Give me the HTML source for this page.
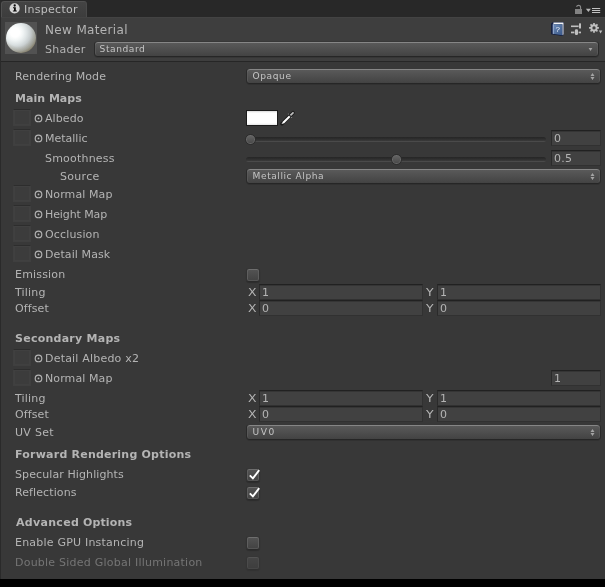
<!DOCTYPE html>
<html><head><meta charset="utf-8">
<style>
*{box-sizing:border-box;margin:0;padding:0}
html,body{width:605px;height:587px;overflow:hidden;background:#383838}
body{position:relative;font-family:"DejaVu Sans","Liberation Sans",sans-serif;font-size:11px;color:#b4b4b4}
.abs{position:absolute}
.t{transform:translateZ(0);position:absolute;white-space:nowrap;line-height:14px;height:14px;letter-spacing:0.1px}
.b{font-weight:bold;letter-spacing:0}
.xy{transform:translateZ(0) scaleX(1.13);transform-origin:0 0}
#tabbar{left:0;top:0;width:605px;height:17px;background:#282828}
#tab{left:1px;top:1px;width:86px;height:16px;background:linear-gradient(#444,#3c3c3c);border:1px solid #505050;border-bottom:none;border-right-color:#4a4a4a;border-radius:3px 3px 0 0}
#hdr{left:0;top:17px;width:605px;height:44px;background:#3e3e3e;border-top:1px solid #434343}
#hdrline{left:0;top:61px;width:605px;height:1px;background:#262626}
#lborder{left:0;top:0;width:1px;height:579px;background:#2a2a2a}
#bottom{left:0;top:579px;width:605px;height:8px;background:#000}
.dd{position:absolute;height:16px;border-radius:4px;border:1px solid #2a2a2a;border-top-color:#383838;border-bottom-color:#262626;background:linear-gradient(#5b5b5b,#434343);box-shadow:inset 0 1px 0 #868686,inset -1px 0 0 #585858, inset 1px 0 0 #585858,0 1px 0 rgba(0,0,0,.12)}
.dd span{transform:translateZ(0);position:absolute;left:5.6px;top:1px;font-size:9.1px;line-height:12px;color:#c4c4c4;letter-spacing:0.55px}
.tf{position:absolute;height:16px;background:#414141;border:1px solid #313131;border-top-color:#212121;border-left-color:#2a2a2a;box-shadow:inset 0 1px 0 rgba(0,0,0,.18)}
.tf span{transform:translateZ(0);letter-spacing:0.3px;position:absolute;left:2px;top:1px;line-height:13px;font-size:11px;color:#b4b4b4}
.tex{position:absolute;left:13px;width:18px;height:17px;background:#3c3c3c;border:1px solid #3f3f3f;border-top:1px solid #2d2d2d;box-shadow:inset 0 0 0 1px #404040}
.cb{position:absolute;left:246px;width:14px;height:14px;margin-top:-1px;border-radius:3px;background:linear-gradient(#545454,#424242);border:1px solid #323232;border-top-color:#363636;border-bottom-color:#2a2a2a;box-shadow:inset 0 1px 0 #6e6e6e,inset 1px 0 0 #5e5e5e,inset -1px 0 0 #5e5e5e,inset 0 -1px 0 #545454,0 1px 1px rgba(0,0,0,.2)}
.circ{position:absolute;left:34.8px;width:7.4px;height:7.4px;border:1px solid #b4b4b4;border-radius:50%}
.circ:after{content:"";position:absolute;left:2.1px;top:2.1px;width:1.2px;height:1.2px;background:#b4b4b4;border-radius:50%}
.track{position:absolute;left:246px;width:300px;height:5px;border-radius:2.5px;background:linear-gradient(#262626 0,#2a2a2a 25%,#343434 60%,#3a3a3a 79%,#4c4c4c 80%,#484848 100%)}
.knob{position:absolute;width:11px;height:11px;border-radius:50%;background:linear-gradient(#666,#464646);border:1px solid #2c2c2c;box-shadow:inset 0 0 0 0.8px #6e6e6e}
#prev{left:5px;top:22px;width:32px;height:32px;background:#525252}
#sphere{left:6px;top:23px;width:30px;height:30px;border-radius:50%;background:radial-gradient(circle at 12px 10px,rgba(0,0,0,0) 13px,rgba(120,105,70,.25) 18px,rgba(110,95,60,.55) 21px),radial-gradient(circle at 9px 9.5px,#fff 0,#fff 4.5px,#f1f5f5 8px,#dce2e3 12px,#c4cacb 16px,#adb3b2 20px,#969a94 24px)}
svg{position:absolute;left:0;top:0}
</style></head><body>
<div id="tabbar" class="abs"></div>
<div id="hdr" class="abs"></div>
<div id="tab" class="abs"></div>
<div id="hdrline" class="abs"></div>
<div id="lborder" class="abs"></div>
<div id="bottom" class="abs"></div>
<div id="prev" class="abs"></div><div id="sphere" class="abs"></div>
<div class="t " style="left:24px;top:3px;color:#bebebe;letter-spacing:0.28px">Inspector</div>
<div class="t" style="left:45px;top:22px;font-size:12px;line-height:16px;height:16px;letter-spacing:0.35px">New Material</div>
<div class="t " style="left:45px;top:43px;;letter-spacing:0.25px">Shader</div>
<div class="dd" style="left:94px;top:41px;width:505px"><span><i style="font-style:normal;margin-left:-1px">Standard</i></span></div>
<div class="t " style="left:15px;top:70px;">Rendering Mode</div>
<div class="dd" style="left:246px;top:68px;width:355px"><span>Opaque</span></div>
<div class="t b" style="left:15px;top:92px;;letter-spacing:0.02px">Main Maps</div>
<div class="tex" style="top:109px"></div>
<div class="t " style="left:45px;top:112px;">Albedo</div>
<div class="abs" style="left:246px;top:110px;width:32px;height:16px;background:linear-gradient(#d8d8d8 0,#fff 14%,#fff 86%,#e4e4e4 100%);border:1px solid #1c1c1c"></div>
<div class="tex" style="top:129px"></div>
<div class="t " style="left:45px;top:132px;;letter-spacing:0.0px">Metallic</div>
<div class="track" style="top:137px"></div><div class="knob" style="left:244.5px;top:133.5px"></div>
<div class="tf" style="left:551px;top:130px;width:50px"><span>0</span></div>
<div class="t " style="left:45px;top:152px;;letter-spacing:0.2px">Smoothness</div>
<div class="track" style="top:157px"></div><div class="knob" style="left:390.5px;top:153.5px"></div>
<div class="tf" style="left:551px;top:150px;width:50px"><span>0.5</span></div>
<div class="t " style="left:60px;top:170px;;letter-spacing:0.3px">Source</div>
<div class="dd" style="left:246px;top:168px;width:355px"><span>Metallic Alpha</span></div>
<div class="tex" style="top:185px"></div>
<div class="t " style="left:45px;top:188px;">Normal Map</div>
<div class="tex" style="top:205px"></div>
<div class="t " style="left:45px;top:208px;;letter-spacing:-0.1px">Height Map</div>
<div class="tex" style="top:225px"></div>
<div class="t " style="left:45px;top:228px;;letter-spacing:0.15px">Occlusion</div>
<div class="tex" style="top:245px"></div>
<div class="t " style="left:45px;top:248px;">Detail Mask</div>
<div class="t " style="left:15px;top:268px;;letter-spacing:0.18px">Emission</div>
<div class="cb" style="top:269px;"></div>
<div class="t " style="left:15px;top:286px;;letter-spacing:0.2px">Tiling</div>
<div class="t xy" style="left:247.5px;top:286px;">X</div>
<div class="tf" style="left:259px;top:284px;width:164px"><span>1</span></div>
<div class="t xy" style="left:425.5px;top:286px;">Y</div>
<div class="tf" style="left:437px;top:284px;width:164px"><span>1</span></div>
<div class="t " style="left:15px;top:302px;;letter-spacing:0.12px">Offset</div>
<div class="t xy" style="left:247.5px;top:302px;">X</div>
<div class="tf" style="left:259px;top:300px;width:164px"><span>0</span></div>
<div class="t xy" style="left:425.5px;top:302px;">Y</div>
<div class="tf" style="left:437px;top:300px;width:164px"><span>0</span></div>
<div class="t b" style="left:15px;top:332px;;letter-spacing:0.25px">Secondary Maps</div>
<div class="tex" style="top:349px"></div>
<div class="t " style="left:45px;top:352px;;letter-spacing:0.2px">Detail Albedo x2</div>
<div class="tex" style="top:369px"></div>
<div class="t " style="left:45px;top:372px;">Normal Map</div>
<div class="tf" style="left:551px;top:370px;width:50px"><span>1</span></div>
<div class="t " style="left:15px;top:392px;;letter-spacing:0.2px">Tiling</div>
<div class="t xy" style="left:247.5px;top:392px;">X</div>
<div class="tf" style="left:259px;top:390px;width:164px"><span>1</span></div>
<div class="t xy" style="left:425.5px;top:392px;">Y</div>
<div class="tf" style="left:437px;top:390px;width:164px"><span>1</span></div>
<div class="t " style="left:15px;top:408px;;letter-spacing:0.12px">Offset</div>
<div class="t xy" style="left:247.5px;top:408px;">X</div>
<div class="tf" style="left:259px;top:406px;width:164px"><span>0</span></div>
<div class="t xy" style="left:425.5px;top:408px;">Y</div>
<div class="tf" style="left:437px;top:406px;width:164px"><span>0</span></div>
<div class="t " style="left:15px;top:426px;;letter-spacing:0.3px">UV Set</div>
<div class="dd" style="left:246px;top:424px;width:355px"><span><i style="font-style:normal;letter-spacing:1.5px">UV0</i></span></div>
<div class="t b" style="left:15px;top:448px;;letter-spacing:0.22px">Forward Rendering Options</div>
<div class="t " style="left:15px;top:468px;">Specular Highlights</div>
<div class="cb" style="top:469px;"></div>
<div class="t " style="left:15px;top:486px;">Reflections</div>
<div class="cb" style="top:487px;"></div>
<div class="t b" style="left:16px;top:516px;letter-spacing:.12px"><i style="font-style:normal;letter-spacing:.3px">Advanced</i> Options</div>
<div class="t " style="left:15px;top:536px;;letter-spacing:0.21px">Enable GPU Instancing</div>
<div class="cb" style="top:537px;"></div>
<div class="t " style="left:15px;top:556px;color:#757575;letter-spacing:0.23px">Double Sided Global Illumination</div>
<div class="cb" style="top:557px;opacity:.5"></div>
<svg width="605" height="587" viewBox="0 0 605 587">
<circle cx="38.5" cy="118.4" r="3.3" fill="none" stroke="#b4b4b4" stroke-width="1.15"/><circle cx="38.5" cy="118.4" r="0.9" fill="#b4b4b4"/>
<circle cx="38.5" cy="138.4" r="3.3" fill="none" stroke="#b4b4b4" stroke-width="1.15"/><circle cx="38.5" cy="138.4" r="0.9" fill="#b4b4b4"/>
<circle cx="38.5" cy="194.4" r="3.3" fill="none" stroke="#b4b4b4" stroke-width="1.15"/><circle cx="38.5" cy="194.4" r="0.9" fill="#b4b4b4"/>
<circle cx="38.5" cy="214.4" r="3.3" fill="none" stroke="#b4b4b4" stroke-width="1.15"/><circle cx="38.5" cy="214.4" r="0.9" fill="#b4b4b4"/>
<circle cx="38.5" cy="234.4" r="3.3" fill="none" stroke="#b4b4b4" stroke-width="1.15"/><circle cx="38.5" cy="234.4" r="0.9" fill="#b4b4b4"/>
<circle cx="38.5" cy="254.4" r="3.3" fill="none" stroke="#b4b4b4" stroke-width="1.15"/><circle cx="38.5" cy="254.4" r="0.9" fill="#b4b4b4"/>
<circle cx="38.5" cy="358.4" r="3.3" fill="none" stroke="#b4b4b4" stroke-width="1.15"/><circle cx="38.5" cy="358.4" r="0.9" fill="#b4b4b4"/>
<circle cx="38.5" cy="378.4" r="3.3" fill="none" stroke="#b4b4b4" stroke-width="1.15"/><circle cx="38.5" cy="378.4" r="0.9" fill="#b4b4b4"/>
<circle cx="14.6" cy="8.4" r="5.1" fill="#d6d6d6"/>
<circle cx="14.7" cy="5.5" r="1.15" fill="#0c0c0c"/><path d="M13 7.2h2.8v3.4h1v1h-3.9v-1h1.1v-2.4h-1z" fill="#0c0c0c"/>
<rect x="575" y="9" width="7" height="5" fill="#828282"/><path d="M576.6 6.8Q576.8 5.4 578.6 5.4Q580.6 5.4 580.6 7.4V9" fill="none" stroke="#8a8a8a" stroke-width="1.1"/>
<path d="M585.9 8.8h5l-2.5 3.2z" fill="#b8b8b8"/><path d="M592 8.5h8.2M592 10.5h8.2M592 12.5h8.2" stroke="#c2c2c2" stroke-width="1"/>
<path d="M281.9 123.7L293 112.7" stroke="#191919" stroke-width="3.5" stroke-linecap="round"/><path d="M281.5 124.1L283 121.6L289.6 115.1L290.9 116.4L284.2 123.2z" fill="#fff"/><path d="M290.2 115.7L293 112.8" stroke="#bcbcbc" stroke-width="1.8" stroke-linecap="round"/><path d="M288.2 113.9l3.4 3.5" stroke="#2a2a2a" stroke-width="1.2"/><circle cx="288.4" cy="114" r=".6" fill="#909090"/><circle cx="291.6" cy="117.5" r=".6" fill="#909090"/>
<path d="M592.5 73l2 3h-4zM590.5 77h4l-2 3z" fill="#a4a4a4"/>
<path d="M592.5 173l2 3h-4zM590.5 177h4l-2 3z" fill="#a4a4a4"/>
<path d="M592.5 429l2 3h-4zM590.5 433h4l-2 3z" fill="#a4a4a4"/>
<path d="M588.6 48h3.8l-1.9 3z" fill="#a4a4a4"/>
<path d="M249.8 475.3l3.1 3.1l6.3 -8.3" fill="none" stroke="#fff" stroke-width="1.9"/>
<path d="M249.8 493.3l3.1 3.1l6.3 -8.3" fill="none" stroke="#fff" stroke-width="1.9"/>
<defs><linearGradient id="bk" x1="0" y1="0" x2="1" y2="1"><stop offset="0" stop-color="#6e8cba"/><stop offset=".5" stop-color="#54729f"/><stop offset="1" stop-color="#38568a"/></linearGradient></defs><path d="M551.1 23.4L553.2 21.9h10.7v12.7l-1.5 1.4L551.1 34.3z" fill="#121d40"/><path d="M553.4 22.5h10.1v11.9l-1.1 .9V24.2h-9z" fill="#f4f4f4"/><path d="M552.8 24.2l9.5 .1v11l-9.5 -1.5z" fill="url(#bk)"/><path d="M553.3 24.3v9.6" stroke="#9fb2d6" stroke-width=".9"/><text x="555.4" y="32.2" font-family="Liberation Sans, sans-serif" font-size="8" fill="#eef2fa">?</text>
<g fill="#c0c0c0"><rect x="571" y="25.5" width="7.6" height="1.6"/><rect x="579" y="23.2" width="2" height="5.4" rx=".5"/><rect x="571" y="31.6" width="3.4" height="1.7"/><rect x="578.6" y="31.6" width="2.4" height="1.7"/><rect x="574.9" y="29.3" width="3.1" height="5.7" rx="1.2"/></g>
<g stroke="#c0c0c0" stroke-width="1.7"><line x1="597.00" y1="27.90" x2="598.90" y2="27.90"/><line x1="596.12" y1="30.02" x2="597.46" y2="31.36"/><line x1="594.00" y1="30.90" x2="594.00" y2="32.80"/><line x1="591.88" y1="30.02" x2="590.54" y2="31.36"/><line x1="591.00" y1="27.90" x2="589.10" y2="27.90"/><line x1="591.88" y1="25.78" x2="590.54" y2="24.44"/><line x1="594.00" y1="24.90" x2="594.00" y2="23.00"/><line x1="596.12" y1="25.78" x2="597.46" y2="24.44"/></g><circle cx="594" cy="27.9" r="2.6" fill="none" stroke="#c0c0c0" stroke-width="1.9"/>
<path d="M598.9 30.4h3.4l-1.7 3.2z" fill="#c0c0c0"/>
</svg>
</body></html>
